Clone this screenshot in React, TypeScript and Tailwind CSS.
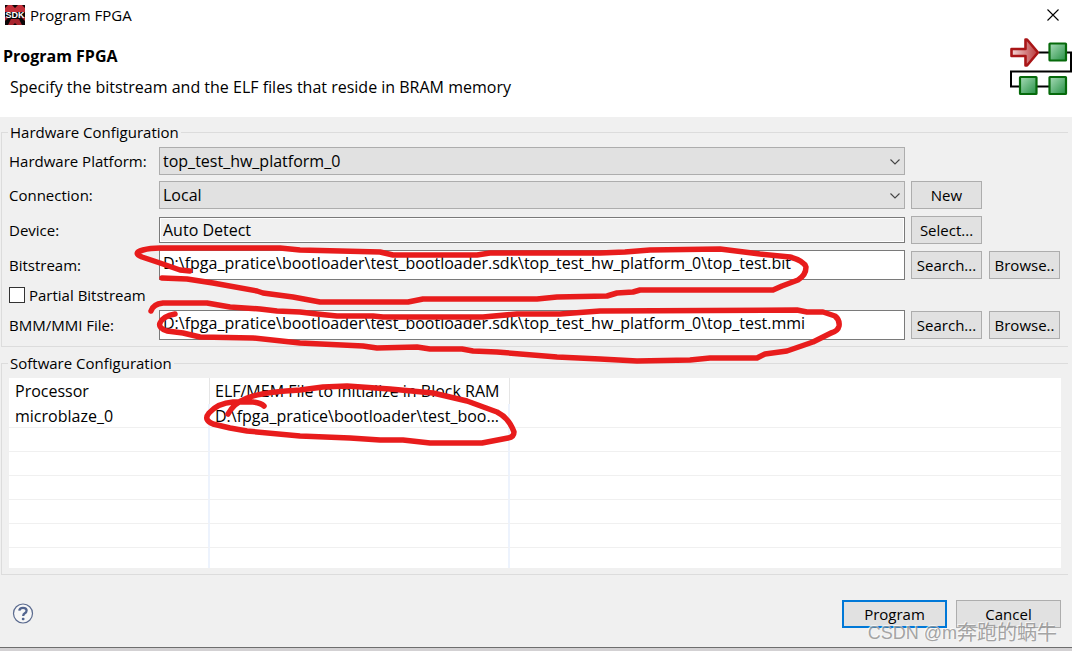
import { useState, type ReactNode } from 'react'

const bitstreamPath = 'D:\\fpga_pratice\\bootloader\\test_bootloader.sdk\\top_test_hw_platform_0\\top_test.bit'
const bmmPath = 'D:\\fpga_pratice\\bootloader\\test_bootloader.sdk\\top_test_hw_platform_0\\top_test.mmi'

// freehand marker strokes
const strokes = [
  'M190 271 L180 270 L160 263 L142 257 Q132 253 143 250 Q150 248 160 248 L280 248 L300 250 L380 252 L393 255 L477 255 L490 253 L600 253 L625 252 L650 250 L720 249 L760 254 L790 257 Q804 261 806 267 Q806 275 798 280 L782 286 L773 290 L640 290 L633 292 L617 293 L607 296 L557 297 L537 299 L423 299 L408 302 L320 302 L293 297 L263 293 L257 291 L213 283 L187 279 L162 278',
  'M151 311 Q153 304 163 303 L207 303 L230 307 L260 309 L277 311 L300 312 L317 314 L337 316 L373 316 L383 317 L483 317 L517 314 L560 314 L600 311 L797 310 L807 312 L823 312 L835 316 Q840 320 839 326 Q838 331 831 333 L813 342 L787 351 L765 354 L757 358 L710 358 L690 360 L637 361 L600 359 L557 357 L497 352 L473 351 L462 349 L430 349 L417 347 L377 348 L363 346 L300 343 L253 338 L200 337 L183 333 L167 331 Q158 328 160 323 Q163 316 175 314',
  'M228 414 Q234 403 247 398 Q262 392 300 390 L323 387 L347 386 L390 389 L433 393 L467 401 L497 412 Q509 418 514 432 Q514 437 508 438 L482 443 L430 443 L403 440 L380 440 L350 438 L300 436 L247 431 L230 428 L213 424 Q203 420 209 413 Q218 403 233 402 L253 402 Q261 403 264 406',
]

function SdkIcon() {
  return (
    <svg width="20" height="20" viewBox="0 0 20 20" className="shrink-0" aria-hidden="true">
      <rect width="20" height="20" fill="#0c0708" />
      <path d="M0 3 L3 0 H7 L10 3 L13 0 H17 L20 3 V7 H0 Z" fill="#c3303a" />
      <path d="M3 20 L6 14 H14 L17 20 H12 L10 18 L8 20 Z M0 12 H4 L0 16 Z M16 12 H20 V16 Z" fill="#a8242d" />
      <text x="10" y="13" textAnchor="middle" fontFamily="Liberation Sans, sans-serif" fontSize="9" fontWeight="700" fill="#ffffff">SDK</text>
    </svg>
  )
}

function ChainIcon() {
  return (
    <svg width="63" height="60" viewBox="0 0 63 60" className="shrink-0" aria-hidden="true">
      <defs>
        <linearGradient id="green" x1="0" y1="0" x2="1" y2="1">
          <stop offset="0" stopColor="#a9dcb9" />
          <stop offset="1" stopColor="#259044" />
        </linearGradient>
        <linearGradient id="red" x1="0" y1="0" x2="1" y2="0">
          <stop offset="0" stopColor="#f3d6d6" />
          <stop offset="1" stopColor="#b9383a" />
        </linearGradient>
      </defs>
      <path d="M30 15.5 H40 M57 15.5 H62 V34.5 H2 V49.5 H11 M28 49.5 H40" fill="none" stroke="#000" strokeWidth="2" />
      <path d="M2.500 12 H16.500 V2.500 L18 2.500 L29 15.500 L18 28.500 L16.500 28.500 V19 H2.500 Z" fill="url(#red)" stroke="#a91517" strokeWidth="2.600" strokeLinejoin="round" />
      {[[40.5, 6.5], [11, 40], [40.5, 40]].map(([x, y]) => (
        <rect key={`${x}-${y}`} x={x} y={y} width="16.500" height="17" rx="0.5" fill="url(#green)" stroke="#066a0b" strokeWidth="2.200" />
      ))}
    </svg>
  )
}

function PushButton({ children, className = 'w-[71px]' }: { children: ReactNode; className?: string }) {
  return (
    <button type="button" className={`h-7 shrink-0 whitespace-nowrap border border-[#adadad] bg-[#e1e1e1] text-center leading-5 ${className}`}>
      {children}
    </button>
  )
}

function Combo({ id, value }: { id: string; value: string }) {
  return (
    <div className="relative">
      <select id={id} className="block h-7 w-full appearance-none border border-[#adadad] bg-[#e1e1e1] pl-[3px] pr-6 text-base leading-5">
        <option>{value}</option>
      </select>
      <svg width="10" height="6" viewBox="0 0 10 6" className="pointer-events-none absolute right-[5px] top-3" aria-hidden="true">
        <path d="M0.500 0.500 L5 5 L9.500 0.500" fill="none" stroke="#444" strokeWidth="1.100" />
      </svg>
    </div>
  )
}

function Group({ title, className, children }: { title: string; className: string; children: ReactNode }) {
  return (
    <fieldset className={`ml-px mr-1 min-w-0 border border-r-0 border-[#dcdcdc] pl-[7px] ${className}`}>
      <legend className="-ml-px h-5 px-0.5 leading-5">{title}</legend>
      {children}
    </fieldset>
  )
}

export default function App() {
  const [bitstream, setBitstream] = useState(bitstreamPath)
  const [bmm, setBmm] = useState(bmmPath)
  const [partial, setPartial] = useState(false)

  const field = 'h-[30px] w-full min-w-0 border border-[#7a7a7a] bg-white pb-1 pl-[3px] text-base leading-5'

  return (
    <div className="relative flex min-h-screen flex-col overflow-hidden bg-[#f0f0f0] font-['Open_Sans','Noto_Sans_CJK_SC',sans-serif] text-[15px] leading-5 text-black">
      <header className="bg-white">
        <div className="flex h-[30px] items-center justify-between pl-[5px] pr-[11px]">
          <div className="flex items-center gap-[5px]">
            <SdkIcon />
            <span>Program FPGA</span>
          </div>
          <button type="button" aria-label="Close" className="p-0.5">
            <svg width="12" height="12" viewBox="0 0 12 12" aria-hidden="true">
              <path d="M0.500 0.500 L11.500 11.500 M11.500 0.500 L0.500 11.500" stroke="#000" strokeWidth="1.100" />
            </svg>
          </button>
        </div>
        <div className="flex h-[87px] justify-between pt-[7px]">
          <div className="pt-[9px]">
            <h1 className="pl-[3px] text-base leading-5 font-bold">Program FPGA</h1>
            <p className="mt-[11px] pl-[10px] text-base leading-5">Specify the bitstream and the ELF files that reside in BRAM memory</p>
          </div>
          <ChainIcon />
        </div>
      </header>

      <main className="flex flex-col gap-1.5 pt-[5px]">
        <Group title="Hardware Configuration" className="pb-1.5">
          <div className="grid grid-cols-[150px_1fr_155px] items-center gap-y-1.5 pr-2 pt-[5px]">
            <label htmlFor="platform">Hardware Platform:</label>
            <Combo id="platform" value="top_test_hw_platform_0" />
            <span />

            <label htmlFor="connection">Connection:</label>
            <Combo id="connection" value="Local" />
            <div className="pl-1.5"><PushButton>New</PushButton></div>

            <label htmlFor="device" className="pt-px">Device:</label>
            <input id="device" readOnly value="Auto Detect" className="mt-px h-[26px] w-full min-w-0 border border-[#7a7a7a] bg-[#f0f0f0] pl-[3px] text-base leading-5 shadow-[inset_0_0_0_1px_#fff]" />
            <div className="pl-1.5 pt-px"><PushButton>Select...</PushButton></div>

            <label htmlFor="bitstream">Bitstream:</label>
            <input id="bitstream" value={bitstream} onChange={(e) => setBitstream(e.target.value)} className={field} />
            <div className="flex gap-[7px] pl-1.5">
              <PushButton>Search...</PushButton>
              <PushButton>Browse..</PushButton>
            </div>

            <label className="col-span-3 flex h-[18px] items-center gap-1">
              <input
                type="checkbox"
                checked={partial}
                onChange={(e) => setPartial(e.target.checked)}
                className="size-4 appearance-none border border-[#333] bg-white checked:bg-[#333]"
              />
              Partial Bitstream
            </label>

            <label htmlFor="bmm">BMM/MMI File:</label>
            <input id="bmm" value={bmm} onChange={(e) => setBmm(e.target.value)} className={field} />
            <div className="flex gap-[7px] pl-1.5">
              <PushButton>Search...</PushButton>
              <PushButton>Browse..</PushButton>
            </div>
          </div>
        </Group>

        <Group title="Software Configuration" className="pb-1.5">
          <div className="pr-[7px] pt-[5px]">
            <table className="w-full table-fixed border-separate border-spacing-0 bg-white text-left text-base leading-5">
              <colgroup>
                <col className="w-[201px]" />
                <col className="w-[300px]" />
                <col />
              </colgroup>
              <thead>
                <tr className="h-[26px]">
                  <th className="border-r border-[#e5e5e5] p-0 pl-1.5 font-normal">Processor</th>
                  <th className="whitespace-nowrap border-r border-[#e5e5e5] p-0 pl-[5px] font-normal">ELF/MEM File to Initialize in Block RAM</th>
                  <th className="p-0" />
                </tr>
              </thead>
              <tbody>
                <tr className="h-6">
                  <td className="border-b border-r-2 border-b-[#f0f0f0] border-r-[#edf3fd] p-0 pl-1.5">microblaze_0</td>
                  <td className="whitespace-nowrap border-b border-r-2 border-b-[#f0f0f0] border-r-[#edf3fd] p-0 pl-[5px]">{'D:\\fpga_pratice\\bootloader\\test_boo...'}</td>
                  <td className="border-b border-[#f0f0f0] p-0" />
                </tr>
                {[1, 2, 3, 4, 5].map((row) => (
                  <tr key={row} className="h-6">
                    <td className="border-b border-r-2 border-b-[#f0f0f0] border-r-[#edf3fd] p-0" />
                    <td className="border-b border-r-2 border-b-[#f0f0f0] border-r-[#edf3fd] p-0" />
                    <td className="border-b border-[#f0f0f0] p-0" />
                  </tr>
                ))}
                <tr className="h-5">
                  <td className="border-r-2 border-[#edf3fd] p-0" />
                  <td className="border-r-2 border-[#edf3fd] p-0" />
                  <td className="p-0" />
                </tr>
              </tbody>
            </table>
          </div>
        </Group>
      </main>

      <footer className="flex items-center justify-between pb-[19px] pl-3 pr-[11px] pt-[25px]">
        <button type="button" aria-label="Help">
          <svg width="22" height="22" viewBox="0 0 22 22" aria-hidden="true">
            <circle cx="11" cy="10.500" r="9.500" fill="#f7f7f7" stroke="#5b6b8f" strokeWidth="1.200" />
            <path d="M7.300 7.700 Q7.500 4.800 11 4.800 Q14.600 4.800 14.600 7.600 Q14.600 9.200 12.800 10.300 Q11.200 11.300 11.200 13" fill="none" stroke="#53658f" strokeWidth="2.300" />
            <rect x="9.800" y="14.800" width="2.700" height="2.400" rx="1" fill="#53658f" />
          </svg>
        </button>
        <div className="flex gap-[9px]">
          <button type="button" className="h-7 w-[105px] border-2 border-[#0078d7] bg-[#e1e1e1] leading-5">Program</button>
          <PushButton className="w-[105px]">Cancel</PushButton>
        </div>
      </footer>
      <div className="mt-auto h-1 border-t border-[#6e6e6e] bg-[#d3d1d3]" />

      <div className="pointer-events-none absolute bottom-1 right-[15px] flex items-center whitespace-nowrap font-['Liberation_Sans','Noto_Sans_CJK_SC',sans-serif] leading-7 text-[#8e8e8e]/80 [text-shadow:-1px_-1px_0_#ffffffb0]">
        <span className="text-[18px]">CSDN @m</span>
        <span className="text-[20px]">奔跑的蜗牛</span>
      </div>

      <svg width="1072" height="651" viewBox="0 0 1072 651" className="pointer-events-none absolute left-0 top-0" aria-hidden="true">
        {strokes.map((d) => (
          <path key={d} d={d} fill="none" stroke="#e81c1c" strokeWidth="5.500" strokeLinecap="round" strokeLinejoin="round" />
        ))}
      </svg>
    </div>
  )
}
